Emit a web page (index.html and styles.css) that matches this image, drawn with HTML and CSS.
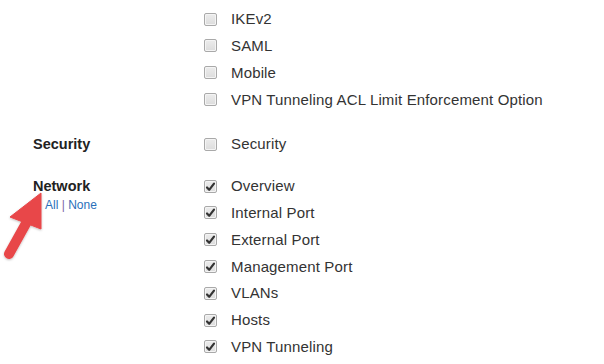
FILE: index.html
```html
<!DOCTYPE html>
<html>
<head>
<meta charset="utf-8">
<link rel="stylesheet" href="styles.css">
</head>
<body>
<div class="page">
  <div class="group first">
    <div class="label"></div>
    <div class="items">
      <div class="row"><span class="cb"></span><span class="txt link">Remote Access Policy</span></div>
      <div class="row"><span class="cb"></span><span class="txt">IKEv2</span></div>
      <div class="row"><span class="cb"></span><span class="txt">SAML</span></div>
      <div class="row"><span class="cb"></span><span class="txt">Mobile</span></div>
      <div class="row"><span class="cb"></span><span class="txt">VPN Tunneling ACL Limit Enforcement Option</span></div>
    </div>
  </div>
  <div class="group sec">
    <div class="label"><div class="name">Security</div></div>
    <div class="items">
      <div class="row"><span class="cb"></span><span class="txt">Security</span></div>
    </div>
  </div>
  <div class="group net">
    <div class="label">
      <div class="name">Network</div>
      <div class="sel"><a>All</a> <span class="pipe">|</span> <a>None</a></div>
    </div>
    <div class="items">
      <div class="row"><span class="cb on"><svg viewBox="0 0 13 13"><path d="M3 7.5 L5.2 9.8 L10 3.6" fill="none" stroke="#333" stroke-width="2.2" stroke-linecap="round" stroke-linejoin="round"/></svg></span><span class="txt">Overview</span></div>
      <div class="row"><span class="cb on"><svg viewBox="0 0 13 13"><path d="M3 7.5 L5.2 9.8 L10 3.6" fill="none" stroke="#333" stroke-width="2.2" stroke-linecap="round" stroke-linejoin="round"/></svg></span><span class="txt">Internal Port</span></div>
      <div class="row"><span class="cb on"><svg viewBox="0 0 13 13"><path d="M3 7.5 L5.2 9.8 L10 3.6" fill="none" stroke="#333" stroke-width="2.2" stroke-linecap="round" stroke-linejoin="round"/></svg></span><span class="txt">External Port</span></div>
      <div class="row"><span class="cb on"><svg viewBox="0 0 13 13"><path d="M3 7.5 L5.2 9.8 L10 3.6" fill="none" stroke="#333" stroke-width="2.2" stroke-linecap="round" stroke-linejoin="round"/></svg></span><span class="txt">Management Port</span></div>
      <div class="row"><span class="cb on"><svg viewBox="0 0 13 13"><path d="M3 7.5 L5.2 9.8 L10 3.6" fill="none" stroke="#333" stroke-width="2.2" stroke-linecap="round" stroke-linejoin="round"/></svg></span><span class="txt">VLANs</span></div>
      <div class="row"><span class="cb on"><svg viewBox="0 0 13 13"><path d="M3 7.5 L5.2 9.8 L10 3.6" fill="none" stroke="#333" stroke-width="2.2" stroke-linecap="round" stroke-linejoin="round"/></svg></span><span class="txt">Hosts</span></div>
      <div class="row"><span class="cb on"><svg viewBox="0 0 13 13"><path d="M3 7.5 L5.2 9.8 L10 3.6" fill="none" stroke="#333" stroke-width="2.2" stroke-linecap="round" stroke-linejoin="round"/></svg></span><span class="txt">VPN Tunneling</span></div>
    </div>
  </div>
</div>
<svg class="arrow" width="60" height="80" viewBox="0 185 60 80">
  <defs>
    <filter id="sh" x="-30%" y="-30%" width="160%" height="160%">
      <feDropShadow dx="0" dy="1" stdDeviation="1.2" flood-color="#000" flood-opacity="0.25"/>
    </filter>
  </defs>
  <g filter="url(#sh)" fill="#e8474a" stroke="#e8474a">
    <polygon points="41,193 10,217 41,229" stroke-width="1" stroke-linejoin="round"/>
    <line x1="29" y1="218" x2="9" y2="254" stroke-width="10" stroke-linecap="round"/>
  </g>
</svg>
</body>
</html>
```
FILE: styles.css
```css
html, body {
  margin: 0;
  padding: 0;
  background: #fff;
  overflow: hidden;
}
body {
  font-family: "Liberation Sans", Arial, sans-serif;
  font-size: 15px;
  letter-spacing: 0.15px;
  color: #333;
  width: 604px;
  height: 364px;
  position: relative;
}
.page {
  display: flex;
  flex-direction: column;
  padding-left: 33px;
  margin-top: -21px;
}
.group {
  display: flex;
}
.sec {
  margin-top: 18px;
}
.net {
  margin-top: 15px;
}
.label {
  width: 171px;
  flex: none;
}
.name {
  font-weight: bold;
  font-size: 14.5px;
  letter-spacing: 0;
  color: #222;
  height: 26.8px;
  line-height: 26.8px;
}
.sel {
  font-size: 12px;
  letter-spacing: 0;
  line-height: 13px;
  margin-top: -1px;
  padding-left: 12px;
  color: #2a6fba;
}
.sel a {
  color: #2a6fba;
}
.sel .pipe {
  color: #7a63a8;
}
.items {
  display: flex;
  flex-direction: column;
}
.row {
  height: 26.8px;
  display: flex;
  align-items: center;
  gap: 14px;
}
.cb {
  width: 11px;
  height: 11px;
  border: 1px solid #a9a9a9;
  border-radius: 2px;
  background: linear-gradient(#ececec, #dcdcdc);
  box-shadow: inset 0 0 0 1px #f4f4f4;
  display: inline-flex;
  position: relative;
}
.cb svg {
  width: 13px;
  height: 13px;
  margin: -1px;
}
.txt {
  line-height: 16px;
}
.link {
  color: #2a6fba;
}
.arrow {
  position: absolute;
  left: 0;
  top: 185px;
}
```
